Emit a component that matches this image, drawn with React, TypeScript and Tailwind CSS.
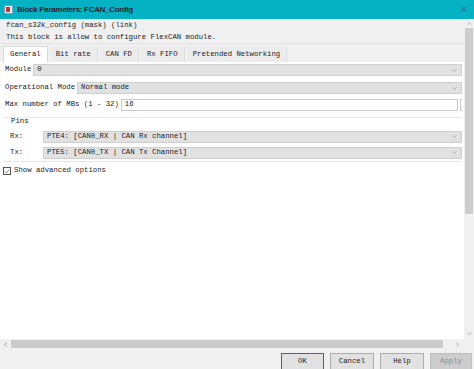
import { ChevronDown, ChevronUp, ChevronLeft, ChevronRight, X, Check } from "lucide-react";

const mono = "font-['Liberation_Mono','DejaVu_Sans_Mono',monospace] text-[7.3px] leading-none text-[#222]";

function Select({ value, className = "" }: { value: string; className?: string }) {
  return (
    <div className={`flex-1 h-[12px] bg-[#e1e1e1] border border-[#cfcfcf] flex items-center justify-between pl-[3px] pr-[3px] ${className}`}>
      <span className={mono}>{value}</span>
      <ChevronDown size={7} strokeWidth={1.5} className="text-[#777]" />
    </div>
  );
}

export default function App() {
  const tabs = ["General", "Bit rate", "CAN FD", "Rx FIFO", "Pretended Networking"];
  return (
    <div className="w-[474px] h-[369px] flex flex-col bg-[#f0f0f0] overflow-hidden">
      {/* title bar */}
      <div className="h-[19px] shrink-0 bg-[#05b2c3] flex items-center pl-[4px] pr-[6px]">
        <div className="w-[9px] h-[9px] bg-[#e8f0f6] border border-[#7a9ab8] mr-[4px] relative">
          <div className="absolute left-[1px] top-[1px] w-[4px] h-[5px] bg-[#c0392b]" />
        </div>
        <span className="font-['Liberation_Sans',sans-serif] text-[8px] font-semibold text-[#2a2326] tracking-[-0.3px]">
          Block Parameters: FCAN_Config
        </span>
        <X size={9} strokeWidth={1.3} className="ml-auto text-[#235]" />
      </div>

      <div className="flex flex-1 min-h-0">
        <div className="flex-1 flex flex-col min-w-0">
          {/* description */}
          <div className="h-[25px] shrink-0 border-t border-[#dfe6ee] border-b border-b-[#e2e2e2] flex flex-col justify-center gap-[5px] pl-[6px]">
            <span className={mono}>fcan_s32k_config (mask) (link)</span>
            <span className={mono}>This block is allow to configure FlexCAN module.</span>
          </div>
          {/* tabs */}
          <div className="h-[18px] shrink-0 flex items-end pl-[3px] gap-[2px]">
            {tabs.map((t, i) => (
              <div
                key={t}
                className={`flex items-center px-[6px] ${
                  i === 0 ? "bg-white border border-[#d9d9d9] border-b-0 h-[16px]" : "h-[15px] bg-[#ececec] border-r border-[#dcdcdc]"
                }`}
              >
                <span className={mono}>{t}</span>
              </div>
            ))}
          </div>
          {/* content */}
          <div className="flex-1 bg-white flex flex-col pt-[2px] pr-[2px]">
            <div className="flex items-center h-[12px] pl-[5px] gap-[2px]">
              <span className={mono}>Module</span>
              <Select value="0" />
            </div>
            <div className="flex items-center h-[12px] mt-[6px] pl-[5px] gap-[2px]">
              <span className={mono}>Operational Mode</span>
              <Select value="Normal mode" />
            </div>
            <div className="flex items-center h-[12px] mt-[5px] pl-[5px] gap-[2px]">
              <span className={mono}>Max number of MBs (1 - 32)</span>
              <div className="flex-1 h-[12px] bg-white border border-[#c8c8c8] flex items-center pl-[3px]">
                <span className={mono}>16</span>
              </div>
              <div className="w-[2px] h-[12px] border border-[#c8c8c8] border-r-0" />
            </div>
            {/* pins group */}
            <div className="mt-[6px] ml-[3px] border-t border-b border-[#e6e6e6] pb-[3px]">
              <div className="h-[9px] flex items-center pl-[7px]">
                <span className={`${mono} bg-white px-[1px] -mt-[1px]`}>Pins</span>
              </div>
              <div className="flex items-center h-[11px] mt-[4px] pl-[7px]">
                <span className={`${mono} w-[33px]`}>Rx:</span>
                <Select value="PTE4: [CAN0_RX | CAN Rx channel]" />
              </div>
              <div className="flex items-center h-[11px] mt-[5px] pl-[7px]">
                <span className={`${mono} w-[33px]`}>Tx:</span>
                <Select value="PTE5: [CAN0_TX | CAN Tx Channel]" />
              </div>
            </div>
            <div className="flex items-center mt-[5px] pl-[3px] gap-[3px]">
              <div className="w-[8px] h-[8px] border border-[#555] flex items-center justify-center bg-white">
                <Check size={7} strokeWidth={2} className="text-[#333]" />
              </div>
              <span className={mono}>Show advanced options</span>
            </div>
          </div>
        </div>
        {/* vertical scrollbar */}
        <div className="w-[10px] bg-[#f0f0f0] flex flex-col items-center">
          <ChevronUp size={7} strokeWidth={1.5} className="text-[#666] mt-[1px]" />
          <div className="w-[8px] h-[186px] bg-[#cdcdcd] mt-[1px]" />
          <div className="flex-1" />
          <ChevronDown size={7} strokeWidth={1.5} className="text-[#666] mb-[2px]" />
        </div>
      </div>

      {/* horizontal scrollbar */}
      <div className="h-[10px] shrink-0 flex items-center bg-[#f0f0f0] pr-[10px]">
        <ChevronLeft size={7} strokeWidth={2} className="text-[#555] ml-[2px]" />
        <div className="h-[8px] w-[432px] bg-[#cbcbcb] ml-[2px]" />
        <div className="flex-1" />
        <ChevronRight size={7} strokeWidth={1.5} className="text-[#666] mr-[3px]" />
      </div>

      {/* buttons */}
      <div className="h-[20px] shrink-0 flex items-start justify-end pt-[4px] pr-[2px] gap-[6px]">
        <div className="w-[43px] h-[17px] border border-[#0078d7] bg-[#e1e1e1] flex items-center justify-center">
          <span className={mono}>OK</span>
        </div>
        <div className="w-[44px] h-[17px] border border-[#adadad] bg-[#e1e1e1] flex items-center justify-center">
          <span className={mono}>Cancel</span>
        </div>
        <div className="w-[44px] h-[17px] border border-[#adadad] bg-[#e1e1e1] flex items-center justify-center">
          <span className={mono}>Help</span>
        </div>
        <div className="w-[42px] h-[17px] border border-[#bfbfbf] bg-[#cccccc] flex items-center justify-center">
          <span className={`${mono} !text-[#8a8a8a]`}>Apply</span>
        </div>
      </div>
    </div>
  );
}
